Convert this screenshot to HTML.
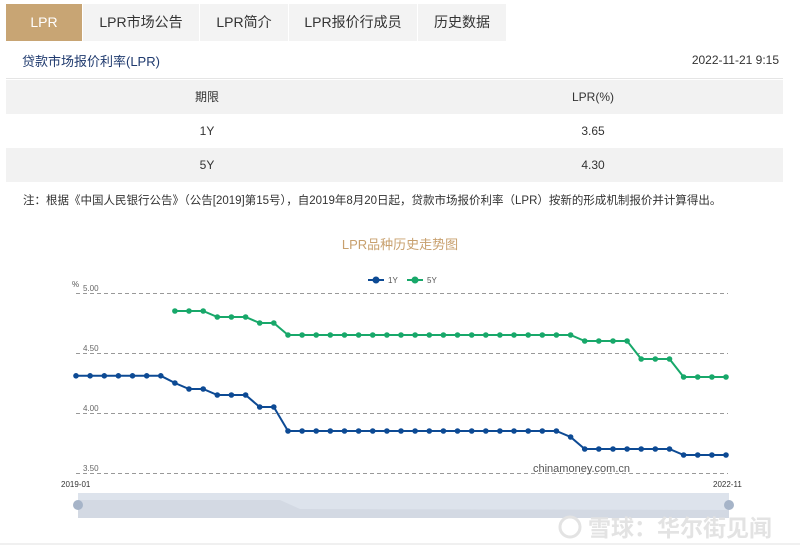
<!DOCTYPE html>
<html><head><meta charset="utf-8"><style>
body{margin:0;width:800px;height:554px;background:#fff;font-family:"Liberation Sans","Noto Sans CJK SC",sans-serif;position:relative;overflow:hidden;color:#333}
.tabs{position:absolute;left:6px;top:4px;height:37px;display:flex}
.tab{height:37px;line-height:37px;background:#f3f3f3;color:#333;font-size:14px;text-align:center;margin-right:1px}
.tab.a{background:#c8a574;color:#fff}
.ttl{position:absolute;left:22px;top:51px;font-size:13px;color:#1f3a6e}
.dt{position:absolute;right:21px;top:53px;font-size:12px;color:#333}
.line{position:absolute;left:6px;top:78px;width:777px;height:1px;background:#e5e5e5}
.row{position:absolute;left:6px;width:777px;height:34px;line-height:34px;font-size:12px}
.row span{position:absolute;transform:translateX(-50%)}
.note{position:absolute;left:23px;top:192px;font-size:11.5px;color:#333;white-space:nowrap}
</style></head><body>
<div class="tabs">
<div class="tab a" style="width:76px">LPR</div>
<div class="tab" style="width:116px">LPR市场公告</div>
<div class="tab" style="width:88px">LPR简介</div>
<div class="tab" style="width:128px">LPR报价行成员</div>
<div class="tab" style="width:88px">历史数据</div>
</div>
<div class="ttl">贷款市场报价利率(LPR)</div>
<div class="dt">2022-11-21 9:15</div>
<div class="line"></div>
<div class="row" style="top:80px;background:#f2f2f2"><span style="left:201px">期限</span><span style="left:587px">LPR(%)</span></div>
<div class="row" style="top:114px"><span style="left:201px">1Y</span><span style="left:587px">3.65</span></div>
<div class="row" style="top:148px;background:#f2f2f2"><span style="left:201px">5Y</span><span style="left:587px">4.30</span></div>
<div class="note">注：根据《中国人民银行公告》（公告[2019]第15号），自2019年8月20日起，贷款市场报价利率（LPR）按新的形成机制报价并计算得出。</div>
<svg id="c" width="800" height="554" style="position:absolute;left:0;top:0" font-family="Liberation Sans, Noto Sans CJK SC, sans-serif">
<text x="400" y="249" text-anchor="middle" font-size="13" fill="#c8a06e">LPR品种历史走势图</text>
<line x1="368" y1="280" x2="384" y2="280" stroke="#0d4a94" stroke-width="2"/><circle cx="376" cy="280" r="3.5" fill="#0d4a94"/><text x="388" y="283" font-size="8" fill="#555">1Y</text>
<line x1="407" y1="280" x2="423" y2="280" stroke="#18a86a" stroke-width="2"/><circle cx="415" cy="280" r="3.5" fill="#18a86a"/><text x="427" y="283" font-size="8" fill="#555">5Y</text>
<text x="72" y="287" font-size="8" fill="#555">%</text>
<g font-size="8" fill="#666"><text x="83" y="291">5.00</text><text x="83" y="351">4.50</text><text x="83" y="411">4.00</text><text x="83" y="471">3.50</text></g>
<g stroke="#999" stroke-dasharray="4,3" stroke-width="1"><line x1="76" y1="293.5" x2="728" y2="293.5"/><line x1="76" y1="353.5" x2="728" y2="353.5"/><line x1="76" y1="413.5" x2="728" y2="413.5"/><line x1="76" y1="473.5" x2="728" y2="473.5"/></g>
<text x="533" y="472" font-size="11" fill="#555">chinamoney.com.cn</text>
<text x="61" y="487" font-size="8" fill="#333">2019-01</text><text x="713" y="487" font-size="8" fill="#333">2022-11</text>
<rect x="78" y="493" width="651" height="25" fill="#dde3ec"/>
<path d="M78 500 L280 500 L300 509 L729 510 L729 518 L78 518Z" fill="#d3d9e3"/>
<circle cx="78" cy="505" r="5" fill="#a6b4c8"/><circle cx="729" cy="505" r="5" fill="#a6b4c8"/>
<circle cx="570" cy="527" r="10" fill="none" stroke="#e3e3e3" stroke-width="3"/>
<text x="588" y="536" font-size="23" fill="#e3e3e3" font-weight="bold">雪球：华尔街见闻</text>
<line x1="0" y1="544" x2="800" y2="544" stroke="#e0e0e0"/>
<g id="g"></g>
</svg>
<script>
var a=[],b=[];function p(arr,v,n){for(var i=0;i<n;i++)arr.push(v)}
p(a,4.31,7);p(a,4.25,1);p(a,4.20,2);p(a,4.15,3);p(a,4.05,2);p(a,3.85,20);p(a,3.80,1);p(a,3.70,7);p(a,3.65,4);
p(b,null,7);p(b,4.85,3);p(b,4.80,3);p(b,4.75,2);p(b,4.65,21);p(b,4.60,4);p(b,4.45,3);p(b,4.30,4);
function X(i){return 76+i*650/46}function Y(v){return 293+(5-v)*120}
var s="";[[a,"#0d4a94"],[b,"#18a86a"]].forEach(function(q){var pts=[],c="";q[0].forEach(function(v,i){if(v==null)return;pts.push(X(i).toFixed(1)+","+Y(v).toFixed(1));c+='<circle cx="'+X(i).toFixed(1)+'" cy="'+Y(v).toFixed(1)+'" r="2.8" fill="'+q[1]+'"/>'});s+='<polyline points="'+pts.join(" ")+'" fill="none" stroke="'+q[1]+'" stroke-width="2"/>'+c});
document.getElementById("g").innerHTML=s;
</script>
</body></html>
